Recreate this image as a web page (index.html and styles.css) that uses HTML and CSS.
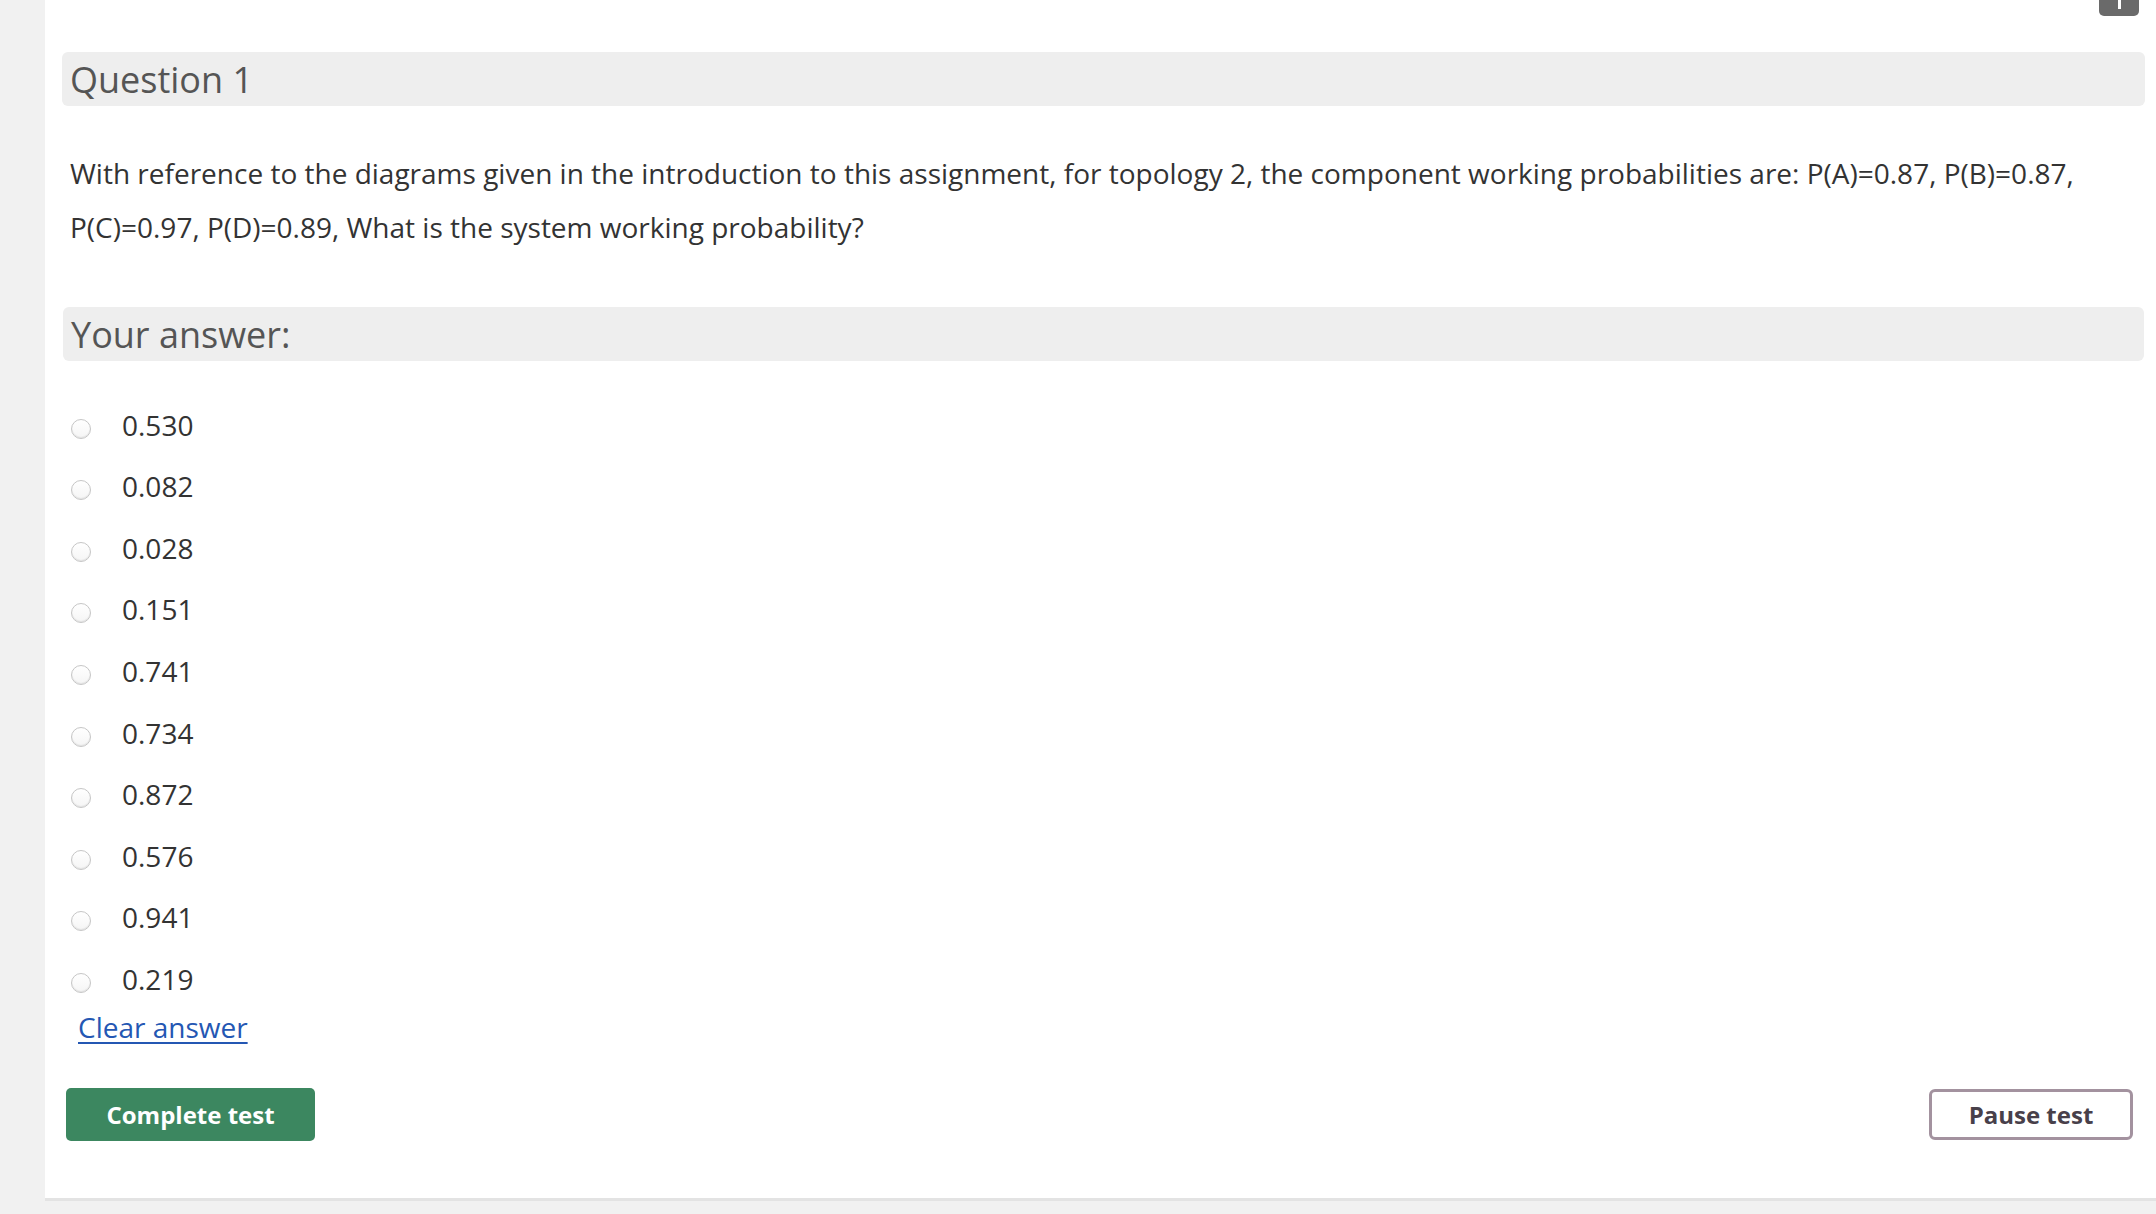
FILE: index.html
```html
<!DOCTYPE html>
<html lang="en">
<head>
<meta charset="utf-8">
<title>Question 1</title>
<link rel="stylesheet" href="styles.css">
</head>
<body>
<div class="page">
  <main class="panel">
    <div class="top-tab"><span class="tab-bar"></span></div>
    <h2 class="section-head">Question 1</h2>
    <p class="question-text">With reference to the diagrams given in the introduction to this assignment, for topology 2, the component working probabilities are: P(A)=0.87, P(B)=0.87, P(C)=0.97, P(D)=0.89, What is the system working probability?</p>
    <h2 class="section-head answer-head">Your answer:</h2>
    <ul class="options">
      <li class="option"><span class="radio"></span><span class="opt-label">0.530</span></li>
      <li class="option"><span class="radio"></span><span class="opt-label">0.082</span></li>
      <li class="option"><span class="radio"></span><span class="opt-label">0.028</span></li>
      <li class="option"><span class="radio"></span><span class="opt-label">0.151</span></li>
      <li class="option"><span class="radio"></span><span class="opt-label">0.741</span></li>
      <li class="option"><span class="radio"></span><span class="opt-label">0.734</span></li>
      <li class="option"><span class="radio"></span><span class="opt-label">0.872</span></li>
      <li class="option"><span class="radio"></span><span class="opt-label">0.576</span></li>
      <li class="option"><span class="radio"></span><span class="opt-label">0.941</span></li>
      <li class="option"><span class="radio"></span><span class="opt-label">0.219</span></li>
    </ul>
    <a class="clear-link" href="#">Clear answer</a>
    <div class="actions">
      <button class="btn btn-complete">Complete test</button>
      <button class="btn btn-pause">Pause test</button>
    </div>
  </main>
</div>
</body>
</html>
```

FILE: styles.css
```css
html, body {
  margin: 0;
  padding: 0;
  background: #f1f1f1;
  font-family: "Open Sans", "Noto Sans", "Liberation Sans", sans-serif;
}

.page {
  padding-left: 45px;
  height: 1214px;
  box-sizing: border-box;
}

.panel {
  position: relative;
  background: #ffffff;
  padding: 52px 11px 57px 17px;
  box-shadow: 0 3px 0 #e3e3e3;
  display: flex;
  flex-direction: column;
}

.top-tab {
  position: absolute;
  top: 0;
  right: 17px;
  width: 40px;
  height: 16px;
  background: #6a6a6a;
  border-radius: 0 0 5px 5px;
}

.tab-bar {
  position: absolute;
  left: 19px;
  top: 0;
  width: 3px;
  height: 9px;
  background: #ffffff;
}

.section-head {
  margin: 0;
  background: #eeeeee;
  border-radius: 6px;
  height: 54px;
  line-height: 56px;
  padding-left: 8px;
  font-size: 36px;
  font-weight: 400;
  color: #555555;
}

.answer-head {
  margin-top: 53px;
  margin-left: 1px;
  margin-right: 1px;
  padding-left: 8px;
}

.question-text {
  margin: 40px 0 0 0;
  padding-left: 8px;
  font-size: 28px;
  line-height: 54px;
  color: #333333;
}

.options {
  list-style: none;
  margin: 33px 0 0 0;
  padding: 0;
}

.option {
  display: flex;
  align-items: center;
  height: 61.55px;
  font-size: 28px;
  color: #333333;
}

.radio {
  width: 18px;
  height: 18px;
  margin-left: 9px;
  margin-top: 8px;
  border-radius: 50%;
  border: 1px solid #c6c6c6;
  background: linear-gradient(#ffffff, #f5f5f5);
  box-shadow: inset 0 -1px 1px rgba(0,0,0,0.08);
  flex: none;
}

.opt-label {
  margin-left: 31px;
  line-height: 40px;
}

.clear-link {
  align-self: flex-start;
  margin-left: 16px;
  font-size: 28px;
  line-height: 36px;
  color: #2457b3;
  text-decoration: underline;
  text-decoration-thickness: 2px;
  text-underline-offset: 4px;
}

.actions {
  margin-top: 43px;
  display: flex;
  justify-content: space-between;
  align-items: center;
  padding: 0 12px 0 4px;
}

.btn {
  font-family: "Open Sans", "Noto Sans", "Liberation Sans", sans-serif;
  font-size: 24px;
  font-weight: 700;
  cursor: pointer;
}

.btn-complete {
  width: 249px;
  height: 53px;
  background: #3c8760;
  color: #ffffff;
  border: none;
  border-radius: 5px;
}

.btn-pause {
  width: 204px;
  height: 51px;
  background: #ffffff;
  color: #48404a;
  border: 3px solid #a3929f;
  border-radius: 6px;
}
```
